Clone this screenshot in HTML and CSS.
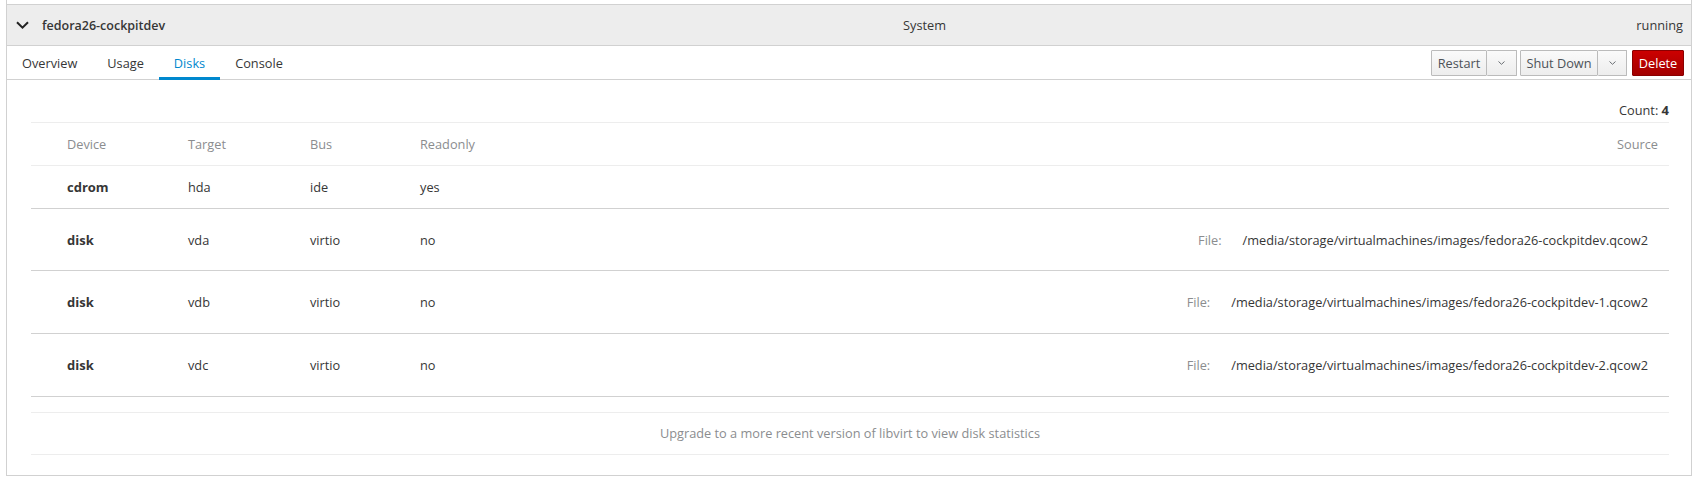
FILE: index.html
```html
<!DOCTYPE html>
<html>
<head>
<meta charset="utf-8">
<link rel="stylesheet" href="styles.css">
</head>
<body>
<div class="vm-list">
  <div class="vm-header">
    <span class="chev">
      <svg width="13" height="9" viewBox="0 0 13 9"><polyline points="1,1.2 6.5,6.7 12,1.2" fill="none" stroke="#222" stroke-width="2"/></svg>
    </span>
    <span class="vm-name">fedora26-cockpitdev</span>
    <span class="vm-conn">System</span>
    <span class="vm-state">running</span>
  </div>
  <div class="vm-tabs">
    <ul class="tabs">
      <li class="tab">Overview</li>
      <li class="tab">Usage</li>
      <li class="tab active">Disks</li>
      <li class="tab">Console</li>
    </ul>
    <div class="actions">
      <div class="btn-group">
        <button class="btn btn-restart">Restart</button>
        <button class="btn caret"><svg width="7" height="4" viewBox="0 0 7 4"><polyline points="0.5,0.5 3.5,3.3 6.5,0.5" fill="none" stroke="#6a6e73" stroke-width="1"/></svg></button>
      </div>
      <div class="btn-group">
        <button class="btn btn-shutdown">Shut Down</button>
        <button class="btn caret caret-narrow"><svg width="7" height="4" viewBox="0 0 7 4"><polyline points="0.5,0.5 3.5,3.3 6.5,0.5" fill="none" stroke="#6a6e73" stroke-width="1"/></svg></button>
      </div>
      <button class="btn btn-danger">Delete</button>
    </div>
  </div>
  <div class="vm-body">
    <div class="count">Count: <b>4</b></div>
    <table class="disks">
      <colgroup>
        <col class="c1"><col class="c2"><col class="c3"><col class="c4"><col class="c5">
      </colgroup>
      <thead>
        <tr>
          <th>Device</th><th>Target</th><th>Bus</th><th>Readonly</th><th class="src">Source</th>
        </tr>
      </thead>
      <tbody>
        <tr class="short">
          <td class="dev">cdrom</td><td>hda</td><td>ide</td><td>yes</td><td class="src"></td>
        </tr>
        <tr class="tall">
          <td class="dev">disk</td><td>vda</td><td>virtio</td><td>no</td>
          <td class="src"><span class="lbl">File:</span><span class="path">/media/storage/virtualmachines/images/fedora26-cockpitdev.qcow2</span></td>
        </tr>
        <tr class="tall">
          <td class="dev">disk</td><td>vdb</td><td>virtio</td><td>no</td>
          <td class="src"><span class="lbl">File:</span><span class="path">/media/storage/virtualmachines/images/fedora26-cockpitdev-1.qcow2</span></td>
        </tr>
        <tr class="tall">
          <td class="dev">disk</td><td>vdc</td><td>virtio</td><td>no</td>
          <td class="src"><span class="lbl">File:</span><span class="path">/media/storage/virtualmachines/images/fedora26-cockpitdev-2.qcow2</span></td>
        </tr>
      </tbody>
    </table>
    <div class="stats-note">Upgrade to a more recent version of libvirt to view disk statistics</div>
  </div>
</div>
</body>
</html>
```

FILE: styles.css
```css
html, body {
  margin: 0;
  padding: 0;
  background: #fff;
}
body {
  font-family: "Open Sans", "Liberation Sans", sans-serif;
  font-size: 12.75px;
  color: #363636;
}
.vm-list {
  margin: 0 5px 0 6px;
  padding-top: 4px;
  border-left: 1px solid #d1d1d1;
  border-right: 1px solid #d1d1d1;
  border-bottom: 1px solid #d1d1d1;
}
.vm-header {
  display: grid;
  grid-template-columns: 35px 861px 1fr auto;
  align-items: center;
  height: 40px;
  background: #ededed;
  border-top: 1px solid #d1d1d1;
  border-bottom: 1px solid #d1d1d1;
  padding-right: 8px;
}
.chev {
  display: flex;
  justify-content: flex-end;
  padding-right: 13px;
  padding-top: 1px;
}
.vm-name {
  font-weight: 600;
  font-size: 12.5px;
}
.vm-tabs {
  display: flex;
  justify-content: space-between;
  align-items: center;
  height: 33px;
  border-bottom: 1px solid #d1d1d1;
  padding-right: 7px;
}
.tabs {
  display: flex;
  list-style: none;
  margin: 0;
  padding: 0;
  height: 100%;
}
.tab {
  padding: 0 15px;
  line-height: 34px;
  height: 31px;
  color: #363636;
  border-bottom: 3px solid transparent;
}
.tab.active {
  color: #0088ce;
  border-bottom-color: #0088ce;
}
.actions {
  display: flex;
  gap: 3px;
  align-items: center;
}
.btn-group {
  display: flex;
}
.btn {
  box-sizing: border-box;
  font-family: inherit;
  font-size: 12.75px;
  height: 26px;
  padding: 0;
  color: #4d5258;
  background: linear-gradient(#fafafa, #ededed);
  border: 1px solid #bbb;
  border-radius: 1px;
  margin: 0;
  line-height: 24px;
  display: flex;
  align-items: center;
  justify-content: center;
}
.btn-restart { width: 56px; }
.btn-shutdown { width: 78px; }
.btn-group .btn + .btn {
  border-left: none;
}
.btn.caret {
  width: 30px;
}
.btn.caret-narrow {
  width: 29px;
}
.btn-danger {
  margin-left: 2px;
  width: 52px;
  color: #fff;
  background: linear-gradient(#cc0000, #a30000);
  border-color: #8b0000;
}
.vm-body {
  padding: 0 22px 20px 24px;
}
.count {
  text-align: right;
  padding: 22px 0 3px;
  line-height: 17px;
}
.count b {
  font-weight: 700;
  font-size: 13px;
}
.disks {
  width: 100%;
  table-layout: fixed;
  border-collapse: collapse;
  border-top: 1px solid #ededed;
}
.c1 { width: 157px; }
.c2 { width: 122px; }
.c3 { width: 110px; }
.c4 { width: 200px; }
th {
  font-weight: 400;
  color: #8b8d8f;
  text-align: left;
  height: 42px;
  padding: 0;
  border-bottom: 1px solid #ededed;
  vertical-align: middle;
}
td {
  padding: 0;
  vertical-align: middle;
  border-bottom: 1px solid #d1d1d1;
  white-space: nowrap;
}
th:first-child, td:first-child {
  padding-left: 36px;
}
th.src {
  text-align: right;
  padding-right: 11px;
}
td.src {
  text-align: right;
  padding-right: 21px;
}
tr.short td { height: 42px; }
tr.tall td { height: 62px; }
tr.tall:nth-child(2) td { height: 61px; }
.dev {
  font-weight: 700;
  font-size: 13px;
}
.lbl {
  color: #8b8d8f;
  margin-right: 21px;
}
.stats-note {
  margin-top: 15px;
  border-top: 1px solid #ededed;
  border-bottom: 1px solid #ededed;
  height: 41px;
  line-height: 41px;
  text-align: center;
  color: #8b8d8f;
}
```
